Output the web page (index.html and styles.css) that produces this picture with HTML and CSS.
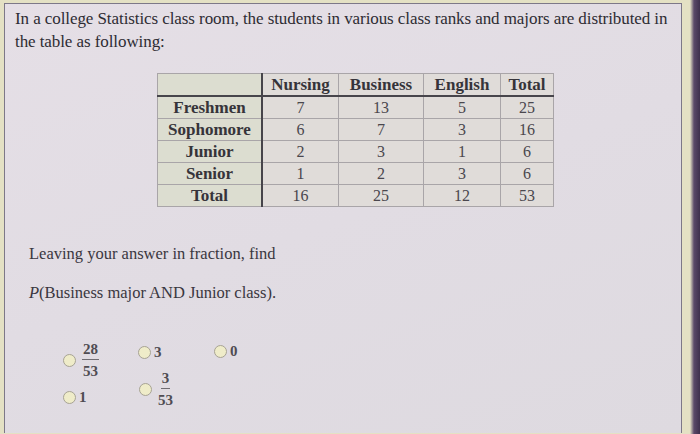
FILE: index.html
```html
<!DOCTYPE html>
<html>
<head>
<meta charset="utf-8">
<link rel="stylesheet" href="styles.css">
</head>
<body>
<div class="screen">
  <div class="panel">
    <p class="intro">In a college Statistics class room, the students in various class ranks and majors are distributed in the table as following:</p>
    <table class="data">
      <thead>
        <tr><th class="corner"></th><th>Nursing</th><th>Business</th><th>English</th><th>Total</th></tr>
      </thead>
      <tbody>
        <tr><th>Freshmen</th><td>7</td><td>13</td><td>5</td><td>25</td></tr>
        <tr><th>Sophomore</th><td>6</td><td>7</td><td>3</td><td>16</td></tr>
        <tr><th>Junior</th><td>2</td><td>3</td><td>1</td><td>6</td></tr>
        <tr><th>Senior</th><td>1</td><td>2</td><td>3</td><td>6</td></tr>
        <tr><th>Total</th><td>16</td><td>25</td><td>12</td><td>53</td></tr>
      </tbody>
    </table>
    <p class="prompt">Leaving your answer in fraction, find</p>
    <p class="prompt prob"><i>P</i>(Business major AND Junior class).</p>
    <div class="options">
      <div class="row row1">
        <label class="opt opt-a"><span class="radio"></span><span class="frac"><span class="num">28</span><span class="den">53</span></span></label>
        <label class="opt opt-b"><span class="radio"></span><span class="val">3</span></label>
        <label class="opt opt-c"><span class="radio"></span><span class="val">0</span></label>
      </div>
      <div class="row row2">
        <label class="opt opt-d"><span class="radio"></span><span class="val">1</span></label>
        <label class="opt opt-e"><span class="radio"></span><span class="frac"><span class="num">3</span><span class="den">53</span></span></label>
      </div>
    </div>
  </div>
</div>
</body>
</html>
```
FILE: styles.css
```css
html, body {
  margin: 0;
  padding: 0;
}
body {
  width: 700px;
  height: 434px;
  overflow: hidden;
  background: linear-gradient(90deg, #e4e1c4 0, #e4e1c4 690px, #5a4868 694px, #3e2f4c 700px);
  font-family: "Liberation Serif", "Times New Roman", serif;
  color: #2e2c33;
}
.screen {
  padding: 3px 0 0 4px;
}
.panel {
  width: 678px;
  height: 430px;
  box-sizing: border-box;
  border: 1px solid #7d7888;
  border-bottom: none;
  background: linear-gradient(160deg, #e5dfe6 0%, #e1dce3 50%, #dedae0 100%);
  padding: 3px 0 0 10px;
}
.intro {
  margin: 0;
  font-size: 17px;
  line-height: 23px;
  width: 664px;
  letter-spacing: -0.08px;
}
.data {
  margin: 20px 0 0 142px;
  border-collapse: collapse;
  border: 1px solid #8c8890;
  background: #e0dcd9;
  font-size: 16px;
}
.data th, .data td {
  border: 1px solid #a9a5a8;
  padding: 0;
  height: 21px;
  text-align: center;
  line-height: 18px;
}
.data th {
  font-weight: bold;
  color: #36343a;
  font-size: 17px;
}
.data thead th {
  height: 21px;
  border-bottom: 2px solid #47454b;
}
.data tbody th {
  background: #dcddd0;
  border-right: 2px solid #47454b;
}
.data .corner {
  width: 103px;
  background: #dcddd0;
  border-right: 2px solid #47454b;
}
.data thead th:nth-child(2) { width: 75px; }
.data thead th:nth-child(3) { width: 84px; }
.data thead th:nth-child(4) { width: 76px; }
.data thead th:nth-child(5) { width: 52px; }
.data td {
  color: #4a474d;
}
.prompt {
  margin: 37px 0 0 14px;
  font-size: 16.5px;
  line-height: 20px;
  color: #3a3740;
}
.prob {
  margin-top: 19px;
}
.options {
  margin: 38px 0 0 48px;
  font-size: 15px;
  color: #4f4c52;
  font-weight: bold;
}
.row {
  display: flex;
  align-items: flex-start;
}
.opt {
  display: flex;
  align-items: center;
  gap: 3px;
  line-height: 16px;
}
.radio {
  width: 11px;
  height: 11px;
  border-radius: 50%;
  border: 1px solid #a7a394;
  background: #efecc9;
  flex: none;
}
.frac {
  display: inline-flex;
  flex-direction: column;
  align-items: center;
  line-height: 16px;
  margin-left: 3px;
}
.frac .num {
  border-bottom: 1px solid #6f6c72;
  padding: 0 1px 2px;
}
.frac .den {
  padding-top: 3px;
}
.opt-a { width: 75px; }
.opt-b { width: 76px; margin-top: 3px; }
.opt-c { margin-top: 2px; }
.opt-d { width: 76px; margin-top: 10px; }
.opt-e { margin-top: -9px; }
```
